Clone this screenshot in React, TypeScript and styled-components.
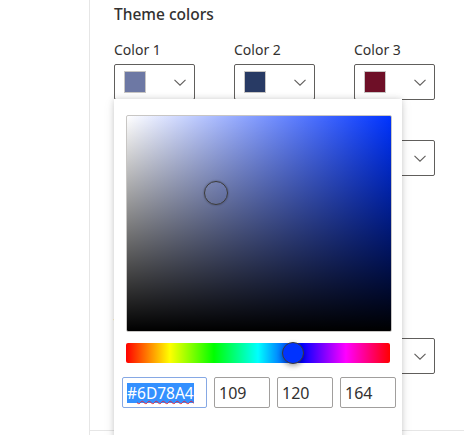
import React, {FC} from 'react';
import styled, {createGlobalStyle} from 'styled-components';

const GlobalStyle = createGlobalStyle`
  html, body {
    margin: 0;
    padding: 0;
    background: #ffffff;
    font-family: "Noto Sans", "Open Sans", sans-serif;
    color: #323130;
  }
  * { box-sizing: border-box; }
`;

const Page = styled.div`
  display: flex;
  width: 464px;
  height: 435px;
  overflow: hidden;
`;

const SideRail = styled.div`
  width: 90px;
  flex-shrink: 0;
  border-right: 1px solid #e6e6e6;
`;

const Main = styled.div`
  position: relative;
  flex: 1;
  height: 431px;
  border-bottom: 1px solid #e6e6e6;
  padding: 3px 0 0 24px;
`;

const SectionTitle = styled.h3`
  margin: 0 0 14px;
  font-size: 15.5px;
  line-height: 22px;
  font-weight: 500;
  color: #323130;
`;

const ColorGrid = styled.div<{gapTop?: number}>`
  display: grid;
  grid-template-columns: repeat(3, 81px);
  column-gap: 39px;
  row-gap: 15px;
  margin-top: ${p => p.gapTop ?? 0}px;
`;

const Field = styled.div`
  display: flex;
  flex-direction: column;
  gap: 4px;
`;

const Label = styled.label`
  font-size: 14px;
  line-height: 21px;
  color: #323130;
`;

const Dropdown = styled.div`
  display: flex;
  align-items: center;
  justify-content: space-between;
  height: 36px;
  padding: 0 8px 0 9px;
  border: 1px solid #605e5c;
  border-radius: 2px;
  background: #fff;
`;

const Swatch = styled.span<{color: string}>`
  width: 22px;
  height: 22px;
  background: ${p => p.color};
  border: 1px solid #c8c6c4;
`;

const Popup = styled.div`
  position: absolute;
  left: 24px;
  top: 99px;
  width: 288px;
  height: 350px;
  background: #fff;
  box-shadow: 0 0 6px rgba(0, 0, 0, 0.16), 0 3px 12px rgba(0, 0, 0, 0.08);
  padding: 16px 0 0 12px;
`;

const SatArea = styled.div<{hue: string}>`
  position: relative;
  width: 266px;
  height: 217px;
  border-radius: 2px;
  border: 1px solid #c8c6c4;
  background:
    linear-gradient(to top, #000, rgba(0, 0, 0, 0)),
    linear-gradient(to right, #fff, ${p => p.hue});
`;

const AreaThumb = styled.div`
  position: absolute;
  width: 24px;
  height: 24px;
  margin: -12px 0 0 -12px;
  border-radius: 50%;
  border: 1.5px solid #3b3a39;
  box-shadow: 0 0 2px rgba(0, 0, 0, 0.4);
`;

const HueBar = styled.div`
  position: relative;
  width: 264px;
  height: 20px;
  margin-top: 11px;
  border-radius: 2px;
  background: linear-gradient(to right, #f00 0%, #ff0 16.6%, #0f0 33.3%, #0ff 50%, #00f 66.6%, #f0f 83.3%, #f00 100%);
`;

const HueThumb = styled.div<{color: string}>`
  position: absolute;
  top: -1px;
  width: 22px;
  height: 22px;
  margin-left: -11px;
  border-radius: 50%;
  background: ${p => p.color};
  border: 1px solid #3b3a39;
  box-shadow: 0 2px 5px rgba(0, 0, 0, 0.35);
`;

const InputRow = styled.div`
  display: flex;
  gap: 7px;
  margin: 14px 0 0 -4px;
`;

const TextBox = styled.div<{wide?: boolean; focused?: boolean}>`
  display: flex;
  align-items: center;
  width: ${p => (p.wide ? 85 : 56)}px;
  height: 31px;
  padding: 0 4px;
  border: 1px solid ${p => (p.focused ? '#86a8e4' : '#a19f9d')};
  border-radius: 2px;
  font-size: 16px;
  color: #323130;
`;

const Selected = styled.span`
  display: inline-block;
  background: #3390ff;
  color: #fff;
  height: 20px;
  line-height: 20px;
  font-size: 15.5px;
`;

const Misspelled = styled.span`
  text-decoration: underline wavy #e0243c;
  text-decoration-thickness: 1px;
  text-underline-offset: 1px;
`;

const Chevron: FC = () => (
  <svg width="12" height="7" viewBox="0 0 12 7">
    <path d="M0.5 0.8l5.5 5.4 5.5-5.4" fill="none" stroke="#605e5c" strokeWidth="1.1"/>
  </svg>
);

const ColorField: FC<{label: string; color: string}> = ({label, color}) => (
  <Field>
    <Label>{label}</Label>
    <Dropdown>
      <Swatch color={color}/>
      <Chevron/>
    </Dropdown>
  </Field>
);

const themeColors = [
  {label: 'Color 1', color: '#6D78A4'},
  {label: 'Color 2', color: '#283A64'},
  {label: 'Color 3', color: '#6E0F27'},
  {label: 'Color 4', color: '#8DA1C4'},
  {label: 'Color 5', color: '#C44D58'},
  {label: 'Color 6', color: '#F2B441'},
];

const textColors = [
  {label: 'Text 1', color: '#252423'},
  {label: 'Text 2', color: '#605E5C'},
  {label: 'Text 3', color: '#B3B0AD'},
];

const App: FC = () => {
  const rgb = [109, 120, 164];
  const max = Math.max(...rgb);
  const min = Math.min(...rgb);
  const sat = (max - min) / max;
  const val = max / 255;
  const hue = 228;

  return (
    <Page>
      <GlobalStyle/>
      <SideRail/>
      <Main>
        <SectionTitle>Theme colors</SectionTitle>
        <ColorGrid>
          {themeColors.map(c => <ColorField key={c.label} label={c.label} color={c.color}/>)}
        </ColorGrid>
        <ColorGrid gapTop={137}>
          {textColors.map(c => <ColorField key={c.label} label={c.label} color={c.color}/>)}
        </ColorGrid>
        <Popup>
          <SatArea hue={`hsl(${hue}, 100%, 50%)`}>
            <AreaThumb style={{left: `${sat * 100}%`, top: `${(1 - val) * 100}%`}}/>
          </SatArea>
          <HueBar>
            <HueThumb color={`hsl(${hue}, 100%, 50%)`} style={{left: `${(hue / 360) * 100}%`}}/>
          </HueBar>
          <InputRow>
            <TextBox wide focused><Selected>#<Misspelled>6D78A4</Misspelled></Selected></TextBox>
            {rgb.map(v => <TextBox key={v}>{v}</TextBox>)}
          </InputRow>
        </Popup>
      </Main>
    </Page>
  );
};

export default App;
